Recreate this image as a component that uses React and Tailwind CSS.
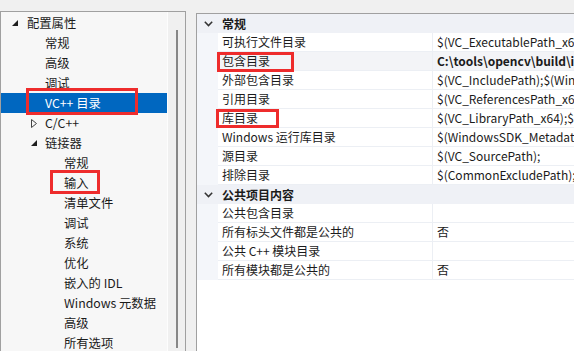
const font = { fontFamily: '"Noto Sans CJK SC", "Noto Sans", sans-serif' };

const treeItems = [
  { label: '配置属性', level: 0, toggle: 'open' },
  { label: '常规', level: 1 },
  { label: '高级', level: 1 },
  { label: '调试', level: 1 },
  { label: 'VC++ 目录', level: 1, selected: true, mark: 'left-[25px] top-[-5px] h-[27px] w-[112px]' },
  { label: 'C/C++', level: 1, toggle: 'closed' },
  { label: '链接器', level: 1, toggle: 'open' },
  { label: '常规', level: 2 },
  { label: '输入', level: 2, mark: 'left-[49px] top-[-3px] h-[24px] w-[50px]' },
  { label: '清单文件', level: 2 },
  { label: '调试', level: 2 },
  { label: '系统', level: 2 },
  { label: '优化', level: 2 },
  { label: '嵌入的 IDL', level: 2 },
  { label: 'Windows 元数据', level: 2 },
  { label: '高级', level: 2 },
  { label: '所有选项', level: 2 },
];

const indent = ['pl-[26px]', 'pl-[44px]', 'pl-[63px]'];

const propGroups = [
  {
    title: '常规',
    rows: [
      { name: '可执行文件目录', value: '$(VC_ExecutablePath_x64);$(CommonExecutablePath)' },
      { name: '包含目录', value: 'C:\\tools\\opencv\\build\\include;$(IncludePath)', bold: true, mark: 'left-[-1px] top-[0px] h-[20px] w-[77px]' },
      { name: '外部包含目录', value: '$(VC_IncludePath);$(WindowsSDK_IncludePath);' },
      { name: '引用目录', value: '$(VC_ReferencesPath_x64);' },
      { name: '库目录', value: '$(VC_LibraryPath_x64);$(WindowsSDK_LibraryPath_x64)', mark: 'left-[-2px] top-[0px] h-[19px] w-[63px]' },
      { name: 'Windows 运行库目录', value: '$(WindowsSDK_MetadataPath);' },
      { name: '源目录', value: '$(VC_SourcePath);' },
      { name: '排除目录', value: '$(CommonExcludePath);$(VC_ExecutablePath_x64)' },
    ],
  },
  {
    title: '公共项目内容',
    rows: [
      { name: '公共包含目录', value: '' },
      { name: '所有标头文件都是公共的', value: '否' },
      { name: '公共 C++ 模块目录', value: '' },
      { name: '所有模块都是公共的', value: '否' },
    ],
  },
];

const Toggle = ({ type }) =>
  type === 'open' ? (
    <svg width="6" height="6" viewBox="0 0 6 6">
      <polygon points="6,0 6,6 0,6" fill="#1e1e1e" />
    </svg>
  ) : (
    <svg width="6" height="9" viewBox="0 0 6 9">
      <polygon points="0.5,0.5 5.5,4.5 0.5,8.5" fill="none" stroke="#444" strokeWidth="1" />
    </svg>
  );

const Chevron = () => (
  <svg width="9" height="6" viewBox="0 0 9 6">
    <polyline points="0.8,0.8 4.5,4.6 8.2,0.8" fill="none" stroke="#333" strokeWidth="1.5" />
  </svg>
);

const TreeRow = ({ item }) => (
  <div
    className={`relative flex h-[20px] items-center ${indent[item.level]} ${
      item.selected ? 'bg-[#0067c0] text-white' : 'text-[#1b1b1b]'
    }`}
  >
    {item.toggle && (
      <span className="absolute top-0 flex h-[20px] items-center" style={{ left: item.level === 0 ? 11 : 30 }}>
        <Toggle type={item.toggle} />
      </span>
    )}
    <span className="whitespace-nowrap text-[12.3px]">{item.label}</span>
    {item.mark && <span className={`absolute border-[3px] border-[#ee2c2c] ${item.mark}`} />}
  </div>
);

const PropRow = ({ row }) => (
  <div className={`flex h-[19px] ${row.bold ? 'bg-[#f3f4f7]' : 'bg-white'}`}>
    <div className="w-[21px] shrink-0 bg-[#f4f6fa]" />
    <div className="relative flex w-[214px] shrink-0 items-center border-b border-[#eceff4] pl-[4px] text-[#1b1b1b] whitespace-nowrap">
      {row.name}
      {row.mark && <span className={`absolute border-[3px] border-[#ee2c2c] ${row.mark}`} />}
    </div>
    <div
      className={`flex flex-1 items-center overflow-hidden border-b border-l border-[#eceff4] pl-[4px] whitespace-nowrap text-[#1b1b1b] ${
        row.bold ? 'font-bold' : ''
      }`}
    >
      {row.value}
    </div>
  </div>
);

const PropHeader = ({ title }) => (
  <div className="flex h-[19px] items-center bg-[#eff1f6]">
    <div className="flex w-[21px] shrink-0 items-center justify-center pl-[1px]">
      <Chevron />
    </div>
    <div className="pl-[4px] font-bold text-[#1b1b1b]">{title}</div>
  </div>
);

export default function App() {
  return (
    <div className="flex h-[351px] w-[574px] overflow-hidden bg-[#f0f0f0] text-[12px] leading-none" style={font}>
      <div className="mt-[11px] flex h-[360px] w-[186px] shrink-0 border border-[#a0a0a0] bg-[#f7f7f7]">
        <div className="flex-1 pt-[1px]">
          {treeItems.map((item, i) => (
            <TreeRow key={i} item={item} />
          ))}
        </div>
        <div className="flex w-[18px] shrink-0 justify-center border-l border-[#fdfdfd] bg-[#f0f0f0] pt-[18px]">
          <div className="h-[318px] w-[2px] bg-[#878787]" />
        </div>
      </div>
      <div className="ml-[10px] mt-[13px] h-[360px] flex-1 border-l border-t border-[#a0a0a0] bg-white">
        {propGroups.map((g) => (
          <div key={g.title}>
            <PropHeader title={g.title} />
            {g.rows.map((r) => (
              <PropRow key={r.name} row={r} />
            ))}
          </div>
        ))}
      </div>
    </div>
  );
}
